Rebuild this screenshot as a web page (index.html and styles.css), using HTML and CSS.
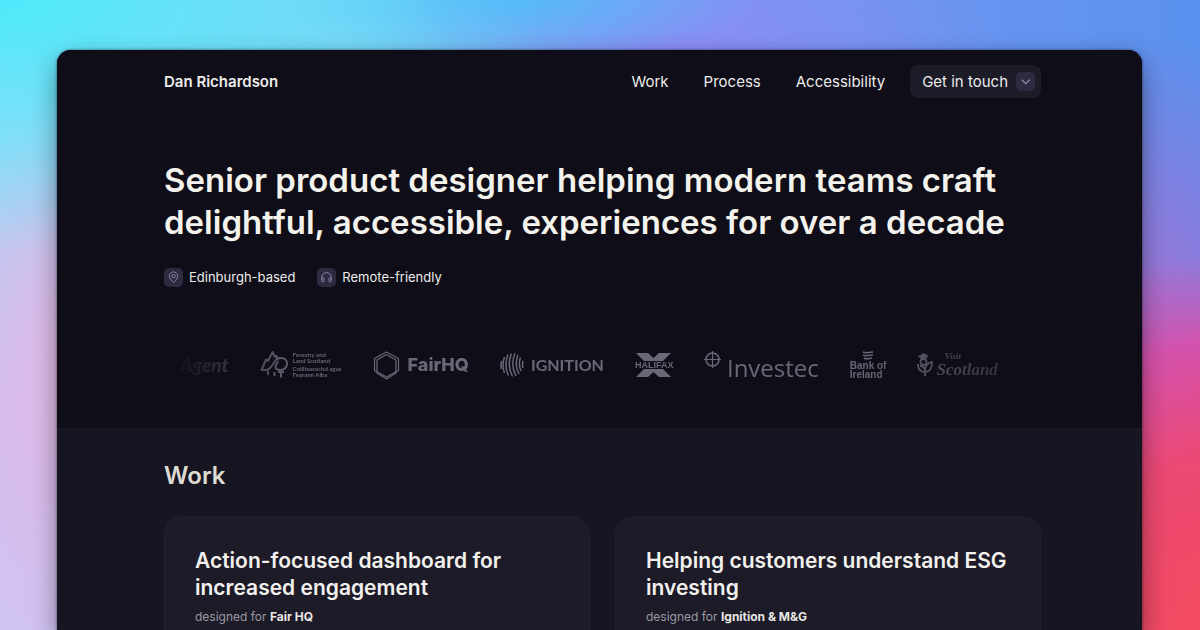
FILE: index.html
```html
<!DOCTYPE html>
<html lang="en">
<head>
<meta charset="utf-8">
<meta name="viewport" content="width=device-width, initial-scale=1">
<title>Dan Richardson</title>
<link rel="stylesheet" href="styles.css">
</head>
<body class="backdrop">
<div class="window">
  <div class="intro">
    <header class="header">
      <a class="brand" href="#">Dan Richardson</a>
      <nav class="nav">
        <a class="nav-link" href="#work">Work</a>
        <a class="nav-link" href="#process">Process</a>
        <a class="nav-link" href="#accessibility">Accessibility</a>
        <button class="contact" type="button">Get in touch
          <span class="tile"><svg width="19" height="19" viewBox="0 0 19 19"><path d="M6 8l3.700 3.700L13.400 8" fill="none" stroke="currentColor" stroke-width="1.200" stroke-linecap="round" stroke-linejoin="round"/></svg></span>
        </button>
      </nav>
    </header>
    <h1 class="headline">Senior product designer helping modern teams craft delightful, accessible, experiences for over a decade</h1>
    <ul class="facts">
      <li class="fact"><span class="tile"><svg width="19" height="19" viewBox="0 0 19 19" fill="none" stroke="currentColor"><path d="M9.500 14.500C7 12 5.300 10.200 5.300 8.100a4.200 4.200 0 0 1 8.400 0c0 2.100-1.700 3.900-4.200 6.400z"/><circle cx="9.500" cy="8.100" r="1.700"/></svg></span>Edinburgh-based</li>
      <li class="fact"><span class="tile"><svg width="19" height="19" viewBox="0 0 19 19" fill="none" stroke="currentColor"><path d="M4.800 12V9.300a4.700 4.700 0 0 1 9.400 0V12"/><rect x="4.800" y="9.800" width="2.300" height="4" rx="1"/><rect x="11.900" y="9.800" width="2.300" height="4" rx="1"/></svg></span>Remote-friendly</li>
    </ul>
    <ul class="logos">
      <li class="logo agent">Agent</li>
      <li class="logo forestry">
        <svg width="30" height="30" viewBox="0 0 30 30" fill="none" stroke="currentColor" stroke-width="2" stroke-linejoin="round"><path d="M7 20H1.500L6 9.500l2 1.500 4.500-9L15 7l1.500-1L18 9"/><path d="M7 20c5-2 5-5 8-9 3.500-5 12-3.500 12 2.500 0 4-3 6.500-6.500 6.500-3 0-5-1-5-3.500 0-2 2-3 2.500-5.500"/><path d="M8 21v4M14.500 22v4M21 20v7.500M18 22h6"/></svg>
        <span class="forestry-text"><span>Forestry and<br>Land Scotland</span><span>Coilltearachd agus<br>Fearann Alba</span></span>
      </li>
      <li class="logo fairhq">
        <svg width="27" height="29" viewBox="0 0 27 29" fill="none" stroke="currentColor" stroke-width="1.200" stroke-linejoin="round"><path d="M13.500 1l12 6.500v12l-12 6.500-12-6.500v-12z"/><path d="M13.500 3.500l9.500 5.500v13l-9.500 6-9.500-6V9z"/></svg>
        <span>FairHQ</span>
      </li>
      <li class="logo ignition">
        <svg width="24" height="26" viewBox="0 0 24 26" fill="none" stroke="currentColor" stroke-width="1.500"><path d="M1.500 9q-1 4 0 8M4.500 5q-3 8 0 16M8 2.500q-4.500 10.500.5 21M11.500 1.500q-5 11.500 1 23M15 1.500q-5 11 1 22.500M18 3q-4 10 1 19M20.500 5.500q-2.500 7 .5 13.500M23 9q-1 4 0 7"/></svg>
        <span>IGNITION</span>
      </li>
      <li class="logo">
        <svg class="halifax" width="37" height="26" viewBox="0 0 37 26" fill="currentColor"><path d="M1 1h12l5.500 5L24 1h12l-8 8H9zM9 17h19l8 8H24l-5.500-5-5.500 5H1z"/><text class="halifax-text" x="0" y="16">HALIFAX</text></svg>
      </li>
      <li class="logo investec">
        <svg width="19" height="19" viewBox="0 0 19 19" fill="none" stroke="currentColor" stroke-width="1.500"><circle cx="9.500" cy="9.500" r="6.500"/><path d="M9.500 1v17M1 9.500h17" stroke-width="1.200"/></svg>
        <span class="investec-text">Investec</span>
      </li>
      <li class="logo ireland">
        <svg width="12" height="9" viewBox="0 0 12 9" fill="none" stroke="currentColor" stroke-width="1.500"><path d="M1 1q2.500 1 5 .5T11 1M1 4q2.500 1 5 .5T11 4M2 7q2 1.200 4 .8T10 7"/></svg>
        <span>Bank of<br>Ireland</span>
      </li>
      <li class="logo visit">
        <svg width="17" height="24" viewBox="0 0 17 24" fill="none" stroke="currentColor" stroke-width="1.800"><path d="M1 3l3-1 2-2 2 1 3 1-1 3-3 1H4z" fill="currentColor" stroke="none"/><circle cx="6.500" cy="9" r="3"/><path d="M1 11c0 6 3 8 7 8 5 0 7-3 7-10-5 1-7 5-7 8v6M3 13c3 0 5 2 5 6"/></svg>
        <span class="visit-text"><span class="visit-top">Visit</span><span>Scotland</span></span>
      </li>
    </ul>
  </div>
  <main class="work" id="work">
    <h2 class="section-title">Work</h2>
    <div class="cards">
      <article class="card"><h3 class="card-title">Action-focused dashboard for increased engagement</h3><p class="credit">designed for <strong>Fair HQ</strong></p></article>
      <article class="card"><h3 class="card-title">Helping customers understand ESG investing</h3><p class="credit">designed for <strong>Ignition &amp; M&amp;G</strong></p></article>
    </div>
  </main>
</div>
</body>
</html>
```
FILE: styles.css
```css
* { box-sizing: border-box; }
ul, h1, h2, h3, p { margin: 0; padding: 0; }
ul { list-style: none; }
svg { display: block; flex: none; }

.backdrop {
  margin: 0;
  min-height: 100vh;
  padding: 50px 58px 0 57px;
  display: flex;
  overflow: hidden;
  font-family: Inter, "Liberation Sans", sans-serif;
  color: #ececea;
  background:
    radial-gradient(ellipse 46% 40% at 0% 0%, #4deafb 0%, #4deafb00 100%),
    radial-gradient(ellipse 20% 10% at 43% 0%, #55b8f8 0%, #55b8f800 100%),
    radial-gradient(ellipse 26% 26% at 57% 9%, #8b8cf4 0%, #8b8cf400 100%),
    radial-gradient(ellipse 9% 44% at 5% 58%, #e0b8e6 0%, #e0b8e600 100%),
    radial-gradient(ellipse 30% 70% at 2% 92%, #d0c2f2 0%, #d0c2f2 40%, #d0c2f200 100%),
    radial-gradient(ellipse 35% 64% at 104% 104%, #f54b58 0%, #ec4974 50%, #d452ad 78%, #d452ad00 100%),
    radial-gradient(ellipse 16% 40% at 96% 46%, #9a76d8 0%, #9a76d800 100%),
    linear-gradient(90deg, #a9d6f6 0%, #84cdf5 35%, #7698f2 60%, #5a91ee 100%);
}

.window {
  flex: 1;
  display: flex;
  flex-direction: column;
  min-width: 0;
  border-radius: 14px 14px 0 0;
  overflow: hidden;
  background: #161521;
  box-shadow: 0 0 3px #0008, 0 10px 26px #0006;
}

.intro {
  padding: 15px 101px 46px 107px;
  background: #0f0d17;
  border-bottom: 1px solid #1a1924;
}

.header { display: flex; align-items: center; justify-content: space-between; }
.brand, .nav-link { color: inherit; text-decoration: none; }
.brand { font-size: 15px; font-weight: 600; }
.nav { display: flex; align-items: center; gap: 35px; font-size: 15px; }
.contact {
  display: flex;
  align-items: center;
  gap: 8px;
  margin-left: -10px;
  padding: 7px 6px 7px 12px;
  border: 0;
  border-radius: 8px;
  background: #1c1b28;
  color: inherit;
  font: inherit;
  line-height: 19px;
}
.tile { border-radius: 5px; background: #2d2b40; color: #9691b3; }

.headline {
  margin-top: 61px;
  font-size: 33px;
  line-height: 42px;
  font-weight: 600;
  color: #f4f2ec;
}

.facts { display: flex; gap: 22px; margin-top: 24px; font-size: 13px; line-height: 20px; }
.fact { display: flex; align-items: center; gap: 6px; }
.fact .tile { color: #8983ad; }

.logos {
  display: flex;
  align-items: center;
  gap: 31px;
  margin-top: 61px;
  height: 34px;
  color: #6b6779;
  white-space: nowrap;
  -webkit-mask-image: linear-gradient(90deg, transparent 1%, #000 16%, #000 80%, transparent 105%);
  mask-image: linear-gradient(90deg, transparent 1%, #000 16%, #000 80%, transparent 105%);
}
.logo { display: flex; align-items: center; flex: none; }
.agent { padding-left: 16px; font: italic 900 19px/20px Lato, sans-serif; }
.forestry { gap: 3px; }
.forestry-text { display: grid; gap: 2px; font: 700 6px/6px Lato, sans-serif; }
.fairhq { gap: 8px; font: 800 18px/20px Inter, sans-serif; }
.ignition { gap: 7px; font: 700 16px/20px Lato, sans-serif; }
.halifax { overflow: visible; }
.halifax-text { font-family: "Liberation Sans", sans-serif; font-weight: 700; font-size: 9px; }
.investec { gap: 5px; align-items: flex-start; }
.investec-text { padding-top: 6px; font: 24px/24px "Open Sans", sans-serif; }
.ireland { flex-direction: column; gap: 1px; font: 700 10px/9px "Liberation Sans", sans-serif; }
.visit { gap: 2px; }
.visit-text { display: grid; font: italic 700 17px/18px "Liberation Serif", serif; }
.visit-top { padding-left: 8px; font-size: 9px; line-height: 9px; }

.work { flex: 1; padding: 31px 101px 0 107px; }
.section-title { font-size: 24px; line-height: 32px; font-weight: 600; color: #dedbd3; }
.cards { display: grid; grid-template-columns: 1fr 1fr; gap: 25px; margin-top: 24px; }
.card {
  padding: 30px 30px 5px;
  border: 1px solid #22212e;
  border-radius: 20px;
  border-bottom: 0;
  border-bottom-left-radius: 0;
  border-bottom-right-radius: 0;
  background: #1c1b27;
}
.card-title { font-size: 21px; line-height: 27px; font-weight: 600; color: #f3f1ee; }
.credit { margin-top: 7px; font-size: 12px; line-height: 18px; color: #9b99a4; }
.credit strong { font-weight: 700; color: #e9e7e5; }
```
